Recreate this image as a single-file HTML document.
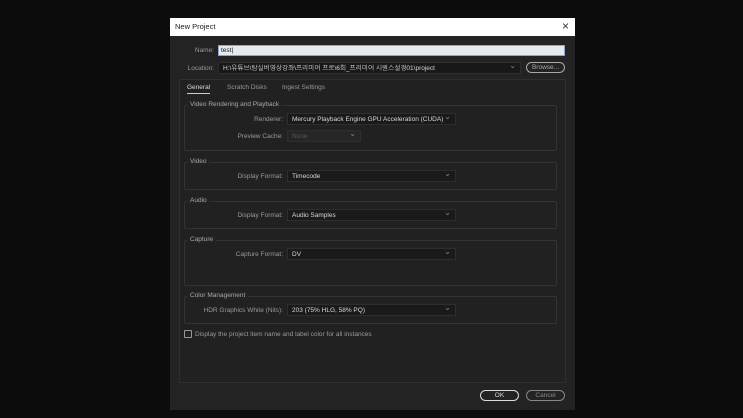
<!DOCTYPE html><html><head><style>
*{box-sizing:border-box;margin:0;padding:0}
body{width:743px;height:418px;background:#0c0c0c;font-family:"Liberation Sans","NanumGothic",sans-serif;font-size:6.5px;color:#aaa;position:relative;overflow:hidden}
.a{position:absolute;white-space:nowrap}
.dlg{left:170px;top:18px;width:405px;height:392px;background:#232323}
.tb{left:170px;top:18px;width:405px;height:18px;background:#fff;color:#222;font-size:7.5px;padding:4px 5px}
.lbl{text-align:right;color:#9a9a9a}
.dd{background:#1a1a1a;border:1px solid #2e2e2e;color:#d8d8d8;padding:1px 4px;height:12px;line-height:9px;overflow:hidden}
.dd:after{content:"⌄";position:absolute;right:4px;top:-2px;color:#888;font-size:8px}
.grp{border:1px solid #333;border-radius:2px}
.gt{background:#232323;padding:0 3px;color:#a8a8a8}
.btn{border:1px solid #aaa;border-radius:6px;height:11px;text-align:center;line-height:9px;color:#aaa}
</style></head><body>
<div class="a dlg"></div>
<div class="a tb">New Project<span style="position:absolute;right:6px;top:1px;font-size:12px;color:#333">×</span></div>
<div class="a lbl" style="left:180px;top:47px;width:34px">Name:</div>
<div class="a" style="left:218px;top:45px;width:347px;height:11px;background:#e6eaf0;border:1px solid #8aa6d0;color:#111;padding:0 2px;line-height:9px">test|</div>
<div class="a lbl" style="left:180px;top:65px;width:34px">Location:</div>
<div class="a dd" style="left:218px;top:62px;width:303px;background:#181818">H:\유튜브\탐실버영상강좌\프리미어 프로\6회_프리미어 시퀀스설정01\project</div>
<div class="a btn" style="left:526px;top:62px;width:39px">Browse...</div>
<div class="a" style="left:179px;top:79px;width:387px;height:304px;border:1px solid #2f2f2f;background:#212121"></div>
<div class="a" style="left:187px;top:84px;color:#ddd">General</div>
<div class="a" style="left:187px;top:93px;width:23px;height:1px;background:#ccc"></div>
<div class="a" style="left:227px;top:84px;color:#999">Scratch Disks</div>
<div class="a" style="left:282px;top:84px;color:#999">Ingest Settings</div>

<div class="a grp" style="left:184px;top:105px;width:373px;height:46px"></div>
<div class="a gt" style="left:187px;top:101px">Video Rendering and Playback</div>
<div class="a lbl" style="left:200px;top:116px;width:83px">Renderer:</div>
<div class="a dd" style="left:287px;top:113px;width:169px">Mercury Playback Engine GPU Acceleration (CUDA)</div>
<div class="a lbl" style="left:200px;top:133px;width:83px">Preview Cache:</div>
<div class="a dd" style="left:287px;top:130px;width:74px;color:#555;background:#262626">None</div>

<div class="a grp" style="left:184px;top:162px;width:373px;height:28px"></div>
<div class="a gt" style="left:187px;top:158px">Video</div>
<div class="a lbl" style="left:200px;top:173px;width:83px">Display Format:</div>
<div class="a dd" style="left:287px;top:170px;width:169px">Timecode</div>

<div class="a grp" style="left:184px;top:201px;width:373px;height:28px"></div>
<div class="a gt" style="left:187px;top:197px">Audio</div>
<div class="a lbl" style="left:200px;top:212px;width:83px">Display Format:</div>
<div class="a dd" style="left:287px;top:209px;width:169px">Audio Samples</div>

<div class="a grp" style="left:184px;top:240px;width:373px;height:46px"></div>
<div class="a gt" style="left:187px;top:236px">Capture</div>
<div class="a lbl" style="left:200px;top:251px;width:83px">Capture Format:</div>
<div class="a dd" style="left:287px;top:248px;width:169px">DV</div>

<div class="a grp" style="left:184px;top:296px;width:373px;height:28px"></div>
<div class="a gt" style="left:187px;top:292px">Color Management</div>
<div class="a lbl" style="left:190px;top:307px;width:93px">HDR Graphics White (Nits):</div>
<div class="a dd" style="left:287px;top:304px;width:169px">203 (75% HLG, 58% PQ)</div>

<div class="a" style="left:184px;top:330px;width:8px;height:8px;border:1px solid #999;border-radius:1px"></div>
<div class="a" style="left:195px;top:331px;color:#9a9a9a">Display the project item name and label color for all instances</div>

<div class="a btn" style="left:480px;top:390px;width:39px;color:#ddd;border-color:#ddd">OK</div>
<div class="a btn" style="left:526px;top:390px;width:39px;color:#888;border-color:#888">Cancel</div>
</body></html>
